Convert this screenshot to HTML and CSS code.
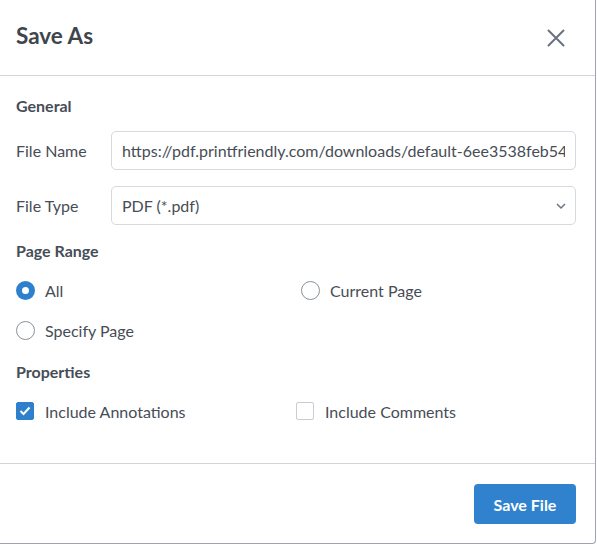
FILE: index.html
```html
<!DOCTYPE html>
<html>
<head>
<meta charset="utf-8">
<link rel="stylesheet" href="styles.css">
</head>
<body>
<div class="dialog">
  <div class="header">
    <h1 class="title">Save As</h1>
    <button class="close" aria-label="Close">
      <svg width="18" height="18" viewBox="0 0 18 18"><path d="M1.5 1.5 L16.5 16.5 M16.5 1.5 L1.5 16.5" stroke="#6b7280" stroke-width="2" fill="none" stroke-linecap="round"/></svg>
    </button>
  </div>
  <div class="body">
    <div class="section-title">General</div>
    <div class="field">
      <label class="field-label" for="fname">File Name</label>
      <input id="fname" class="input" type="text" readonly value="https://pdf.printfriendly.com/downloads/default-6ee3538feb54c6f6b0">
    </div>
    <div class="field">
      <label class="field-label">File Type</label>
      <div class="input select">
        <span>PDF (*.pdf)</span>
        <svg width="12" height="8" viewBox="0 0 12 8"><path d="M2 2 L6 6 L10 2" stroke="#6b7280" stroke-width="1.5" fill="none"/></svg>
      </div>
    </div>
    <div class="section-title sec2">Page Range</div>
    <div class="radio-grid">
      <div class="option"><span class="radio checked"></span>All</div>
      <div class="option"><span class="radio"></span>Current Page</div>
      <div class="option"><span class="radio"></span>Specify Page</div>
    </div>
    <div class="section-title sec3">Properties</div>
    <div class="check-grid">
      <div class="option"><span class="checkbox checked"><svg width="12" height="10" viewBox="0 0 12 10"><path d="M1.5 5 L4.5 8 L10.5 1.5" stroke="#fff" stroke-width="2" fill="none"/></svg></span>Include Annotations</div>
      <div class="option"><span class="checkbox"></span>Include Comments</div>
    </div>
  </div>
  <div class="footer">
    <button class="primary">Save File</button>
  </div>
</div>
</body>
</html>
```
FILE: styles.css
```css
html, body {
  margin: 0;
  padding: 0;
  background: #fff;
}
body {
  font-family: Lato, "Liberation Sans", sans-serif;
  color: #474d56;
}
.dialog {
  width: 595px;
  height: 543px;
  border-right: 1px solid #9ca3af;
  border-bottom: 1px solid #9ca3af;
  border-bottom-right-radius: 4px;
  display: flex;
  flex-direction: column;
  box-sizing: content-box;
}
.header {
  height: 76px;
  flex-shrink: 0;
  box-sizing: border-box;
  border-bottom: 1px solid #d4d4d8;
  display: flex;
  align-items: center;
  justify-content: space-between;
  padding: 0 30px 0 16px;
}
.title {
  margin: 0;
  font-size: 22.5px;
  font-weight: 700;
  color: #3f454d;
  line-height: 1;
  padding-bottom: 2px;
}
.close {
  background: none;
  border: none;
  padding: 0;
  width: 18px;
  height: 18px;
  display: flex;
}
.body {
  padding: 21px 19px 0 16px;
  flex: 1;
  border-bottom: 1px solid #d4d4d8;
}
.section-title {
  font-size: 16px;
  font-weight: 700;
  color: #474d56;
  line-height: 18px;
}
.field {
  display: flex;
  align-items: center;
  margin-top: 16px;
}
.field-label {
  width: 95px;
  font-size: 16px;
  flex-shrink: 0;
}
.input {
  flex: 1;
  min-width: 0;
  height: 39px;
  box-sizing: border-box;
  border: 1px solid #d6d9de;
  border-radius: 5px;
  padding: 0 10px;
  font-family: Lato, "Liberation Sans", sans-serif;
  font-size: 16px;
  display: flex;
  align-items: center;
  white-space: nowrap;
  overflow: hidden;
  color: #474d56;
  background: #fff;
  outline: none;
}
.select {
  justify-content: space-between;
  padding-right: 8px;
}
.sec2 {
  margin-top: 17px;
}
.radio-grid {
  display: grid;
  grid-template-columns: 285px 1fr;
  row-gap: 22px;
  margin-top: 21px;
}
.option {
  display: flex;
  align-items: center;
  font-size: 16px;
  height: 18px;
}
.radio {
  width: 19px;
  height: 19px;
  box-sizing: border-box;
  border-radius: 50%;
  border: 1px solid #8a9099;
  margin-right: 10px;
  flex-shrink: 0;
}
.radio.checked {
  border: 6px solid #2f80cc;
  background: #fff;
}
.sec3 {
  margin-top: 24px;
}
.check-grid {
  display: grid;
  grid-template-columns: 280px 1fr;
  margin-top: 21px;
}
.checkbox {
  width: 18px;
  height: 18px;
  box-sizing: border-box;
  border: 1px solid #c9cdd3;
  border-radius: 2px;
  margin-right: 11px;
  flex-shrink: 0;
  display: flex;
  align-items: center;
  justify-content: center;
}
.checkbox.checked {
  background: #2f80cc;
  border-color: #2f80cc;
}
.footer {
  height: 79px;
  box-sizing: border-box;
  padding-top: 1px;
  flex-shrink: 0;
  display: flex;
  justify-content: flex-end;
  align-items: center;
  padding-right: 19px;
}
.primary {
  width: 102px;
  height: 40px;
  background: #3182ce;
  color: #fff;
  border: none;
  border-radius: 4px;
  font-family: Lato, "Liberation Sans", sans-serif;
  font-size: 16px;
  font-weight: 700;
}
```
